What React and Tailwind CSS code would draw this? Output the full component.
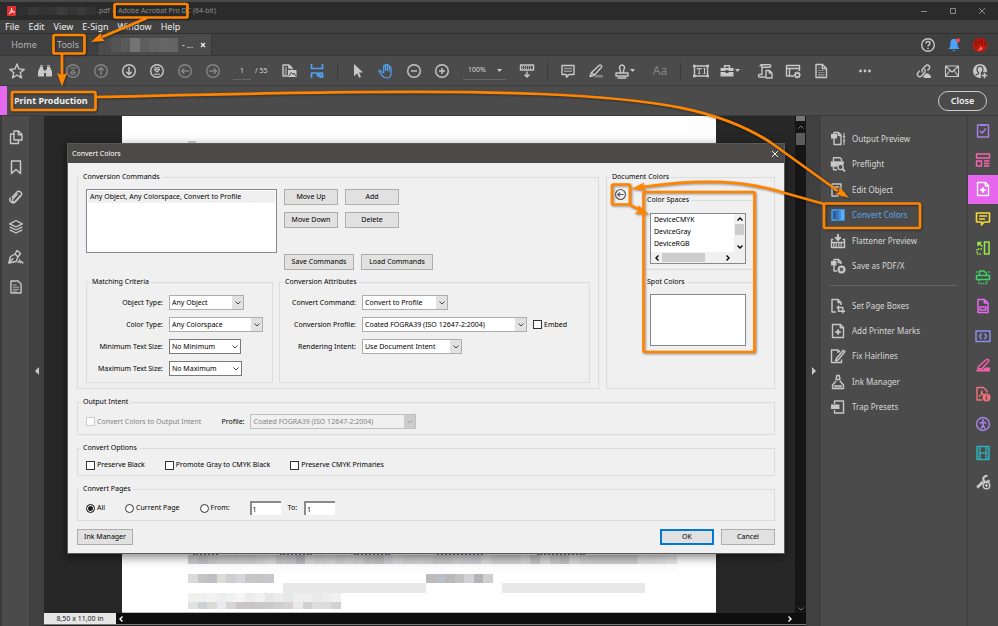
import React from "react";

function Icon({ children, className = "text-[#c8c8c8]", size = 16, box = "0 0 16 16" }) {
  return (
    <svg
      width={size}
      height={size}
      viewBox={box}
      fill="none"
      stroke="currentColor"
      strokeWidth="1.4"
      strokeLinejoin="round"
      className={"shrink-0 " + className}
      aria-hidden="true"
    >
      {children}
    </svg>
  );
}

const solid = { fill: "currentColor", stroke: "none" };

const glyphs = {
  star: <path d="M8 1l2 5 5.2.4-4 3.3 1.3 5.1L8 12l-4.500 2.800 1.300-5.100-4-3.300L6 6z" />,
  binoculars: (
    <g {...solid}>
      <path d="M3 4h3v2l1 1v6.500H1V8.500zM13 4h-3v2L9 7v6.500h6V8.500z" />
      <path d="M7 7.500h2v2.500H7zM3 2.200h3v1.200H3zM10 2.200h3v1.200h-3z" />
    </g>
  ),
  first: (
    <>
      <circle cx="8" cy="8" r="6.300" />
      <path d="M5 5h6M8 7l-2.600 2.800h5.200zM5.400 11.200h5.200" strokeWidth="1.100" />
    </>
  ),
  up: (
    <>
      <circle cx="8" cy="8" r="6.300" />
      <path d="M8 12V4.600M5.200 7.300L8 4.500l2.800 2.800" />
    </>
  ),
  down: (
    <>
      <circle cx="8" cy="8" r="6.300" />
      <path d="M8 4v7.400M5.200 8.700L8 11.500l2.800-2.800" />
    </>
  ),
  last: (
    <>
      <circle cx="8" cy="8" r="6.300" />
      <path d="M5 11.200h6M8 9L5.400 6.300h5.200zM5.400 4.800h5.200" strokeWidth="1.100" />
    </>
  ),
  left: (
    <>
      <circle cx="8" cy="8" r="6.300" />
      <path d="M12 8H4.600M7.300 5.200L4.500 8l2.800 2.800" />
    </>
  ),
  right: (
    <>
      <circle cx="8" cy="8" r="6.300" />
      <path d="M4 8h7.400M8.700 5.200L11.500 8l-2.800 2.800" />
    </>
  ),
  thumbs: (
    <>
      <path d="M7 13H2V2h6l3 3v1.500M7.800 2v3H11" />
      <path d="M3.500 7h2.500M3.500 9h2.500M3.500 11h2.500M4 5h2" strokeWidth="1" />
      <path d="M7 7h8.500v7H7z" {...solid} />
      <path d="M8 13l2.200-3.500 1.600 2L13 10l1.800 3" stroke="#4b4b4b" strokeWidth="1" />
    </>
  ),
  fit: <path d="M2.500 1v4.500h11V1M2.500 15v-5h6l3 2.500v2.500M8.500 10v3h3M13.500 15v-5H10" strokeWidth="1.700" />,
  cursor: <path d="M4 1l9 8.500H9l2 4.500-1.800.8L7.200 10.400 4 13z" {...solid} />,
  hand: (
    <path d="M4.600 9.500L2.300 7.400c-.8-.6-1.800.3-1.200 1.100l3.300 4.300C5.400 14.300 6.600 15 8.500 15c3 0 4.500-1.800 4.500-4.500V4.700c0-1.100-1.700-1.100-1.700 0V8 3c0-1.100-1.900-1.100-1.900 0v4.500V2.200C9.400 1 7.500 1 7.500 2.200v5.300V3.200c0-1.100-1.800-1.100-1.800 0v6.300z" strokeWidth="1.200" />
  ),
  minus: (
    <>
      <circle cx="8" cy="8" r="6.300" />
      <path d="M5 8h6" />
    </>
  ),
  plus: (
    <>
      <circle cx="8" cy="8" r="6.300" />
      <path d="M5 8h6M8 5v6" />
    </>
  ),
  keyboard: (
    <>
      <path d="M1.500 2h13v5h-13z" />
      <path d="M3 3.800h10M3 5.300h10" strokeDasharray="1 1" strokeWidth="1" />
      <path d="M8 8.500v5M5.500 11.500L8 14l2.500-2.500" />
    </>
  ),
  comment: (
    <>
      <path d="M2 2.500h12v9H9l-2.500 2.800v-2.800H2z" />
      <path d="M4 5.500h8M4 8.200h8" opacity=".6" />
    </>
  ),
  pen: (
    <>
      <path d="M3.500 9.500l7.800-7.300c1.300-1 3.200.8 2.200 2.100L6.500 12l-4.500 1.500zM3.500 9.500l3 2.500" />
      <path d="M8 12h7v2.500H6z" {...solid} opacity=".45" />
    </>
  ),
  stamp: <path d="M2 10h12v3H2zM3.500 15h9M6.200 10c.8-2 .3-3-.3-4a2.500 2.500 0 1 1 4.200 0c-.6 1-1.100 2-.3 4" />,
  textbox: (
    <>
      <path d="M1.500 3h13v10h-13z" />
      <path d="M4 6.500V5.500h4.500v1M6.200 5.500v5M5.200 10.500h2M10.500 5.500h2M11.500 5.500v5M10.500 10.500h2" strokeWidth="1" />
      <path d="M0 1.700h2.500v2.500H0zM13.500 1.700H16v2.500h-2.500zM0 11.800h2.500v2.500H0zM13.500 11.800H16v2.500h-2.500z" {...solid} />
    </>
  ),
  toolbox: (
    <>
      <path d="M1.500 5h13v3h-5V7h-3v1h-5zM1.500 9h5v1h3V9h5v4.500h-13z" {...solid} />
      <path d="M5.500 5V2.700h5V5" />
    </>
  ),
  scroll: (
    <>
      <path d="M8 14H2.500c-1.500 0-1.500-2.500 0-2.500H5V4C5 1.500 3 1.500 3 3.500M4 1.700h8.500c1.700 0 1.700 2.600 0 2.600H5.500" />
      <path d="M9 7.500h3.500L15 10v5H9zM12.300 7.500V10H15" />
    </>
  ),
  formgear: (
    <>
      <path d="M9 13H1.500V2.500h13V8M1.500 5.500h13M4.500 5.500V13" />
      <circle cx="12.300" cy="12" r="2" />
      <path d="M12.300 8.500v1.500M12.300 14v1.500M8.800 12h1.500M14.300 12h1.500M9.800 9.500l1 1M13.800 13.500l1 1M14.800 9.500l-1 1M10.800 13.500l-1 1" />
    </>
  ),
  page: (
    <>
      <path d="M3 1.500h6.500L13.500 5.500v9H3zM9.300 1.500v4h4.200" />
      <path d="M5 5h2.500M5 7.500h6.500M5 9.500h6.500M5 11.500h6.500M5 13h6.500" opacity=".5" strokeWidth="1" />
    </>
  ),
  dots: (
    <g {...solid}>
      <circle cx="3.500" cy="8" r="1.400" />
      <circle cx="8" cy="8" r="1.400" />
      <circle cx="12.500" cy="8" r="1.400" />
    </g>
  ),
  link: (
    <>
      <path d="M7 9.500c-1.300-1-1.300-2.400-.3-3.500l3-3.200c2.300-2 5.300.8 3.300 3.200L11.500 7.600M8 6c1.500 1 1.500 2.500.5 3.700l-3 3.200c-2.300 2.200-5.500-.7-3.500-3.200l1.700-1.900" />
      <path d="M8.500 15a1.700 1.700 0 0 1 .3-3.300 2.600 2.600 0 0 1 4.800.3 1.600 1.600 0 0 1 .6 3z" {...solid} />
    </>
  ),
  mail: <path d="M1.500 3h13v10.500h-13zM1.500 3L8 9l6.500-6M1.500 13.500L6 7.500M14.500 13.500L10 7.500" strokeWidth="1.100" />,
  user: (
    <>
      <circle cx="8" cy="8" r="7" {...solid} />
      <path d="M3.500 12.300l3-1.600v-1C4 7.500 4.800 3.200 8 3.200s4 4.300 1.500 6.500v1.300" stroke="#4b4b4b" strokeWidth="1.300" />
      <circle cx="12.500" cy="12.500" r="3.800" fill="#4b4b4b" stroke="none" />
      <path d="M12.500 9.700v5.600M9.700 12.500h5.600" strokeWidth="1.600" />
    </>
  ),
  help: (
    <>
      <circle cx="8" cy="8" r="6.300" />
      <path d="M6 6.500c0-2.600 4-2.600 4 0 0 1.400-2 1.400-2 3M8 10.700v1.200" />
    </>
  ),
  copy: (
    <>
      <path d="M6 2h4.500L14 5.500V11H6zM10.300 2v3.700H14" />
      <path d="M6 5H2.500v9.500h8V11" />
    </>
  ),
  bookmark: <path d="M3.500 2h9v12.500L8 10.500l-4.500 4z" strokeWidth="1.500" />,
  clip: <path d="M12.500 6.500l-5.200 5.700c-1.800 1.700-4-.4-2.500-2.200L9.600 4.800M4 8.500l4.700-5.200c2.600-2.500 6.500.7 4 3.700l-5 5.600c-3 3.200-7.800-.7-5-4.200" />,
  layers: <path d="M8 1.500l6.300 3.300L8 8 1.700 4.800zM1.700 7.800L8 11l6.300-3.200M1.700 10.800L8 14l6.300-3.200" />,
  sign: (
    <>
      <path d="M.8 14l1.700-6.500 4.500-2.500 3 3-2 4.500zM7 5l2-3.500 3.500 3L10 8M.8 14l4.500-4.700" />
      <path d="M9.500 13.800l2.300-2.800.5 2.800 1.400-1.300.6 1.300h1.200" strokeWidth="1.200" />
    </>
  ),
  doc: (
    <>
      <path d="M3 2h7l3 3v9H3z" />
      <path d="M5 6h3.500M5 8.200h6M5 10.400h6M5 12.200h4" opacity=".8" strokeWidth="1" />
    </>
  ),
  preview: (
    <>
      <path d="M4 7v6.500h7V4L8.500 1.500H4V3M8.300 1.500V4.500H11" />
      <path d="M1 3h6v4.500H1z" {...solid} />
      <path d="M14 2v12M13 5.500h2.300M13 10h2.300" strokeWidth="1.100" />
    </>
  ),
  preflight: (
    <>
      <path d="M3.500 5V1.800h6.500L11.500 3.300V5" />
      <path d="M.8 5.300h13v3.200h-1.500a3.800 3.800 0 0 0-5.500 2.300H.8z" {...solid} />
      <path d="M3.500 10.500V13.800H7" />
      <circle cx="10.500" cy="11" r="2.600" />
      <path d="M12.500 13l2.500 2.300" strokeWidth="1.800" />
    </>
  ),
  edit: (
    <>
      <path d="M9 14H2V2h9v5M4 5h5M4 8h3" />
      <path d="M11.700 8v6.500M8.500 11.300H15" strokeWidth="1.900" />
    </>
  ),
  flatten: (
    <>
      <path d="M3.500 6.500h-2v8h13v-8h-2M2 9.500h12" />
      <path d="M3 11h10M3 13h10" strokeDasharray="1.500 1" />
      <path d="M8 1v5M5.300 4.200L8 7l2.700-2.800" strokeWidth="1.900" />
    </>
  ),
  savex: (
    <>
      <path d="M4 7v6h3M11 6V4L8.500 1.500H4V3M8.300 1.500V4.500H11" />
      <path d="M1 3h5.500v4.500H1z" {...solid} />
      <circle cx="11.500" cy="11.500" r="4" {...solid} />
      <path d="M10 10l3 3M13 10l-3 3" stroke="#4b4b4b" />
    </>
  ),
  boxes: (
    <>
      <path d="M6 14H2V1.500h6l3 3V7M8 1.500v3h3" />
      <path d="M8.500 7.500v5.700H15M6.500 9.500h6.300V15.500" />
    </>
  ),
  marks: (
    <>
      <path d="M2.500 1.500h8l3 3v10h-11zM10.300 1.500v3.200h3.200" />
      <path d="M8 6v6M5 9h6" />
      <circle cx="8" cy="9" r="1.800" {...solid} />
    </>
  ),
  hair: (
    <>
      <path d="M11.500 11.500v3h-10V2H8l2 2M8 2v3" />
      <path d="M15 3.500l-7 8.500-2.500 1 .8-2.500 7-8.300z" />
    </>
  ),
  ink: (
    <>
      <path d="M6 5.500L6.800 1.500h2.400L10 5.500M5.500 5.500h5M6 7L2.500 11v3.500h11V11L10 7" />
      <path d="M4 11h8v2.500H4z" {...solid} opacity=".8" />
    </>
  ),
  trap: (
    <>
      <path d="M4.500 5V2h9v12h-9v-3" />
      <path d="M1 5.500h8.500v4.500H1z" {...solid} />
    </>
  ),
  check: (
    <>
      <path d="M2.500 2h11v12h-11zM5 8l2.200 2L11 5.500" />
      <path d="M5.500 1h5v2h-5z" {...solid} />
    </>
  ),
  organize: <path d="M1.500 2h13v4h-13zM1.500 9h5v5h-5zM9 9h5.500M9 11.500h5.500M9 14h5.500" />,
  note: <path d="M1.500 2h13v9H9l-2.500 3v-3h-5zM4 5h8M4 8h6" strokeWidth="1.600" />,
  crop: (
    <>
      <path d="M9.500 2H14v12H9.500z" strokeWidth="1.500" />
      <path d="M7 9H2v5h5" strokeDasharray="1.500 1" />
      <path d="M7.500 6.500L3 2.500M3 6V2.500h3.500" strokeWidth="1.500" />
    </>
  ),
  scan: (
    <>
      <path d="M4.500 6V2h4.500l2.500 2.500V6M1.500 6.500h13v4h-13z" strokeWidth="1.500" />
      <path d="M4 11v3.500h8V11M1 3h2M13 3h2" strokeDasharray="1.500 1" />
    </>
  ),
  redact: (
    <>
      <path d="M3 1.500h6.500L13 5v9.500H3zM9.300 1.500V5H13" strokeWidth="1.500" />
      <path d="M5 9h6v3H5z" />
    </>
  ),
  code: (
    <>
      <path d="M1 3h14v10.500H1z" strokeWidth="1.500" />
      <path d="M6.500 5.500L4.500 8.200l2 2.800M9.500 5.500l2 2.700-2 2.800" />
    </>
  ),
  sketch: (
    <>
      <path d="M3.500 9.500l8-7c1.500-1 3 .8 2 2.100L7 11.500l-4 .5z" strokeWidth="1.500" />
      <path d="M2 12.500h6l2-2h5v4H1z" {...solid} />
    </>
  ),
  pdfinfo: (
    <>
      <path d="M7 14H2V1.500h6.500L12 5v1.500M4 11c2-2 3-4 3-6 0 3 1 4 2 4" />
      <circle cx="11.500" cy="11.500" r="4" {...solid} />
      <path d="M11.500 10.800v3M11.500 9v1" stroke="#4b4b4b" />
    </>
  ),
  access: (
    <>
      <circle cx="8" cy="8" r="6.500" />
      <circle cx="8" cy="4.500" r="1.200" {...solid} />
      <path d="M4.500 6.700h7M8 6.700v3M8 9.500l-2 3M8 9.500l2 3" strokeWidth="1.500" />
    </>
  ),
  film: (
    <>
      <path d="M2 1.500h12v13H2zM5 1.500v13M11 1.500v13M5 8h6" strokeWidth="1.400" />
      <path d="M3 3v11M13 3v11" strokeDasharray="1 1" />
    </>
  ),
  wrench: (
    <>
      <path d="M2.200 13.500L8 7.800" strokeWidth="2.800" />
      <path d="M12.500 2.200a3 3 0 1 0 1.600 3.800" strokeWidth="2.200" />
      <circle cx="11.500" cy="11.500" r="3.300" fill="#4b4b4b" />
      <path d="M11.500 9.800v3.400M9.800 11.500h3.400" strokeWidth="1.200" />
    </>
  ),
};

function ToolButton({ name, label, tone, caret }) {
  return (
    <button type="button" aria-label={label} className="flex h-7 w-7 shrink-0 items-center justify-center">
      <Icon className={tone}>{glyphs[name]}</Icon>
      {caret && <Caret />}
    </button>
  );
}

function Caret() {
  return (
    <svg width="5" height="3" viewBox="0 0 5 3" className="shrink-0" aria-hidden="true">
      <path d="M0 0h5L2.500 3z" fill="#c8c8c8" />
    </svg>
  );
}

function Divider() {
  return <span className="mx-[6px] h-4 w-px shrink-0 bg-[#3a3a3a]" />;
}

function Chevron({ turn = "down", bold }) {
  const d = {
    down: "M1.500 2.500L4 5l2.500-2.500",
    up: "M1.500 5.500L4 3l2.500 2.500",
    left: "M5.500 1.500L3 4l2.500 2.500",
    right: "M2.500 1.500L5 4 2.500 6.500",
  }[turn];
  return (
    <svg width="8" height="8" viewBox="0 0 8 8" className="shrink-0" aria-hidden="true">
      <path d={d} fill="none" stroke="currentColor" strokeWidth={bold ? "1.400" : "1"} />
    </svg>
  );
}

function Select({ id, value, className, plain, disabled }) {
  const frame = disabled
    ? "border-[#bfbfbf] bg-[#f0f0f0] text-[#838383]"
    : plain
      ? "border-[#7a7a7a] bg-white text-black"
      : "border-[#adadad] bg-white text-black";
  const arrow = disabled ? "bg-[#cccccc] text-[#a0a0a0]" : plain ? "bg-white text-[#444]" : "bg-[#e1e1e1] text-[#444]";
  return (
    <span className={"relative flex h-[15px] shrink-0 " + className}>
      <select
        id={id}
        disabled={disabled}
        defaultValue={value}
        className={"h-full w-full appearance-none border pl-[2px] pr-3 leading-[13px] opacity-100 " + frame}
      >
        <option>{value}</option>
      </select>
      <span className={"pointer-events-none absolute inset-y-px right-px flex w-[11px] items-center justify-center " + arrow}>
        <Chevron />
      </span>
    </span>
  );
}

function Group({ title, className = "", children }) {
  return (
    <fieldset className={"min-w-0 border border-[#dcdcdc] px-[8px] pb-[5px] " + className}>
      <legend className="-ml-[5px] h-[10px] px-[2px] leading-[10px]">{title}</legend>
      {children}
    </fieldset>
  );
}

function Push({ children, className = "", primary }) {
  return (
    <button
      type="button"
      className={
        "h-4 shrink-0 bg-[#e1e1e1] leading-[12px] " +
        (primary ? "border-2 border-[#0078d7] " : "border border-[#adadad] ") +
        className
      }
    >
      {children}
    </button>
  );
}

function Check({ id, children, disabled }) {
  return (
    <span className={"flex items-center gap-[2px] " + (disabled ? "text-[#838383]" : "")}>
      <input
        id={id}
        type="checkbox"
        disabled={disabled}
        className={"h-[9px] w-[9px] appearance-none border bg-white " + (disabled ? "border-[#cccccc]" : "border-[#333]")}
      />
      <label htmlFor={id}>{children}</label>
    </span>
  );
}

function Radio({ id, children, checked }) {
  return (
    <span className="flex items-center gap-[2px]">
      <input
        id={id}
        type="radio"
        name="pages"
        defaultChecked={checked}
        className="h-[9px] w-[9px] appearance-none rounded-full border border-[#333] bg-white checked:bg-[#222] checked:shadow-[inset_0_0_0_1px_white]"
      />
      <label htmlFor={id}>{children}</label>
    </span>
  );
}

function Field({ id, label, children }) {
  return (
    <>
      <label htmlFor={id} className="text-right whitespace-nowrap">{label}</label>
      {children}
    </>
  );
}

function ConvertDialog() {
  return (
    <section
      role="dialog"
      aria-label="Convert Colors"
      className="absolute left-[67px] top-[143px] w-[718px] border border-[#5a5a5a] bg-[#f0f0f0] text-[7px] leading-[10px] text-black shadow-[0_3px_10px_rgba(0,0,0,0.5)]"
    >
      <header className="flex h-[19px] items-center justify-between bg-[#4b4a48] pl-[4px] pr-[5px] text-white">
        <h2>Convert Colors</h2>
        <button type="button" aria-label="Close dialog">
          <svg width="8" height="8" viewBox="0 0 8 8" aria-hidden="true">
            <path d="M1 1l6 6M7 1L1 7" stroke="#eee" />
          </svg>
        </button>
      </header>
      <div className="flex flex-col gap-2 px-[9px] pb-[8px] pt-[9px]">
        <div className="flex gap-[7px]">
          <Group title="Conversion Commands" className="flex-1">
            <div className="flex gap-[7px] pt-[7px]">
              <ul className="h-16 w-[191px] border border-[#828790] bg-white p-px">
                <li className="bg-[#f0f0f0] px-[2px] py-px">Any Object, Any Colorspace, Convert to Profile</li>
              </ul>
              <div className="flex flex-col">
                <div className="flex gap-[7px]">
                  <Push className="w-[54px]">Move Up</Push>
                  <Push className="w-[54px]">Add</Push>
                </div>
                <div className="mt-[7px] flex gap-[7px]">
                  <Push className="w-[54px]">Move Down</Push>
                  <Push className="w-[54px]">Delete</Push>
                </div>
                <div className="mt-[26px] flex gap-[7px]">
                  <Push className="w-[70px]">Save Commands</Push>
                  <Push className="w-[72px]">Load Commands</Push>
                </div>
              </div>
            </div>
            <div className="mt-[7px] flex gap-[6px]">
              <Group title="Matching Criteria" className="w-[187px]">
                <div className="grid grid-cols-[68px_auto] items-center justify-start gap-x-[6px] gap-y-[7px] pb-px pt-[8px]">
                  <Field id="objtype" label="Object Type:"><Select id="objtype" value="Any Object" className="w-[75px]" /></Field>
                  <Field id="coltype" label="Color Type:"><Select id="coltype" value="Any Colorspace" className="w-[94px]" /></Field>
                  <Field id="mintext" label="Minimum Text Size:"><Select id="mintext" value="No Minimum" plain className="w-[72px]" /></Field>
                  <Field id="maxtext" label="Maximum Text Size:"><Select id="maxtext" value="No Maximum" plain className="w-[73px]" /></Field>
                </div>
              </Group>
              <Group title="Conversion Attributes" className="flex-1">
                <div className="grid grid-cols-[68px_auto] items-center justify-start gap-x-[6px] gap-y-[7px] pt-[8px]">
                  <Field id="command" label="Convert Command:"><Select id="command" value="Convert to Profile" className="w-[86px]" /></Field>
                  <Field id="profile" label="Conversion Profile:">
                    <span className="flex items-center gap-[6px]">
                      <Select id="profile" value="Coated FOGRA39 (ISO 12647-2:2004)" className="w-[165px]" />
                      <Check id="embed">Embed</Check>
                    </span>
                  </Field>
                  <Field id="intent" label="Rendering Intent:"><Select id="intent" value="Use Document Intent" className="w-[100px]" /></Field>
                </div>
              </Group>
            </div>
          </Group>
          <Group title="Document Colors" className="w-[169px]">
            <div className="flex gap-4">
              <button type="button" aria-label="Collapse" className="mt-[7px] h-[11px] w-[11px]">
                <Icon size={11} box="1 1 14 14" className="text-[#555]">{glyphs.left}</Icon>
              </button>
              <div className="flex w-[112px] flex-col gap-[7px] pt-[13px]">
                <Group title="Color Spaces" className="border-x-0">
                  <div className="mt-2 flex h-[51px] flex-col border border-[#828790] bg-white">
                    <div className="flex min-h-0 flex-1">
                      <ul className="flex-1 overflow-hidden px-[3px] leading-[12px]">
                        <li>DeviceCMYK</li>
                        <li>DeviceGray</li>
                        <li>DeviceRGB</li>
                        <li className="whitespace-nowrap">sRGB IEC61966-2.1</li>
                      </ul>
                      <div className="flex w-[11px] flex-col items-center justify-between bg-[#f0f0f0] py-px text-black">
                        <Chevron bold turn="up" />
                        <span className="mb-2 h-[11px] w-[9px] bg-[#cdcdcd]" />
                        <Chevron bold />
                      </div>
                    </div>
                    <div className="flex h-[11px] items-center bg-[#f0f0f0] pl-[2px] pr-[13px] text-black">
                      <Chevron bold turn="left" />
                      <span className="ml-px mr-auto h-[9px] w-[43px] bg-[#cdcdcd]" />
                      <Chevron bold turn="right" />
                    </div>
                  </div>
                </Group>
                <Group title="Spot Colors" className="border-x-0 border-b-0">
                  <ul className="mt-[7px] h-[52px] border border-[#828790] bg-white" />
                </Group>
              </div>
            </div>
          </Group>
        </div>
        <Group title="Output Intent">
          <div className="flex items-center pt-[7px]">
            <Check id="toout" disabled>Convert Colors to Output Intent</Check>
            <label htmlFor="outprofile" className="ml-5 mr-[6px]">Profile:</label>
            <Select id="outprofile" disabled value="Coated FOGRA39 (ISO 12647-2:2004)" className="w-[166px]" />
          </div>
        </Group>
        <Group title="Convert Options">
          <div className="flex gap-5 pt-[7px]">
            <Check id="black">Preserve Black</Check>
            <Check id="gray">Promote Gray to CMYK Black</Check>
            <Check id="cmyk">Preserve CMYK Primaries</Check>
          </div>
        </Group>
        <Group title="Convert Pages">
          <div className="flex items-center gap-5 pt-[7px]">
            <Radio id="all" checked>All</Radio>
            <Radio id="current">Current Page</Radio>
            <Radio id="range">From:</Radio>
            <span className="flex items-center gap-[7px]">
              <input aria-label="From page" defaultValue="1" className="h-[14px] w-[31px] border-l-2 border-t-2 border-[#8a8a8a] bg-white px-px" />
              <label htmlFor="topage">To:</label>
              <input id="topage" defaultValue="1" className="h-[14px] w-[31px] border-l-2 border-t-2 border-[#8a8a8a] bg-white px-px" />
            </span>
          </div>
        </Group>
        <footer className="flex gap-[7px]">
          <Push className="mr-auto w-14">Ink Manager</Push>
          <Push primary className="w-[54px]">OK</Push>
          <Push className="w-[54px]">Cancel</Push>
        </footer>
      </div>
    </section>
  );
}

function Mosaic({ cells, className }) {
  return (
    <div className={"flex " + className}>
      {cells.map((c, i) => (
        <span key={i} className="flex-1" style={{ backgroundColor: c }} />
      ))}
    </div>
  );
}

const headBar = "#cdcdcf #c4c4c8 #cdcdcd #d2d2d2 #d0d0d2 #d3d3d3 #d0d0d0 #d6d6d6 #dcdcdc #cbcbcd #c8c8ca #bbbac2 #d9d9d9 #d4d4d4 #d8d8d8 #d0d0d0 #d6d6d6 #d2d2d2 #c7c7c9 #c3c3c3 #d0d0d8 #dadada #d3d3d3 #d5d5d5 #d3d3d5 #cbcbcb #cccbcb #d4d3d3 #d0d0d4 #cdcdd3 #dcdcdc #d2d2d2 #d2d2d2 #d2d2d2 #dadada #c6c5c2 #d8dbdf #cbcbcd #c4c4c8 #dcdcdc #d2d2d2 #cfcfcf #cfcfcf #cfcfcf #cfcfcf #cfcfcf #e2e2e2 #e0e0e0 #e4e4e4 #e8e8e8".split(" ");
const wordBar = "#dadad8 #c4c4c6 #bfbfc3 #dcdcda #cfcfd1 #d4d6dc #c7c5c6 #c5c5c5 #c8c8cc".split(" ");
const darkBar = "#bdbab8 #babec8 #b8b8ba #c2c2c2 #d2d2d4 #b4b4b6 #cfcfcf".split(" ");
const faintBar = "#efefed #f0f0f0 #f2f2f2 #ededed #eff0f0 #f6f6f6 #ececec #f1f1f1 #e6e6e6 #ececec #e4e8e8 #eeeeee #ededed #ebe8ea #ededed #eef2f2".split(" ");
const footBar = "#e0e2e2 #cdd1d3 #dadad8 #e8ecee #d6d4d4 #cac6c6 #c9c5c7 #c9c9cb #cacaca #d0cecf #d6d2d0 #e8e8ea #d0d0d2 #dcdcdc #dcdcdc #d2d2d4".split(" ");
const titleBar = "#303030 #383838 #333333 #363636 #3c3c3c #353535 #3a3a3a #333333".split(" ");
const tabBar = "#545454 #5a5a5a #747474 #5d5d5d #626262 #666666 #646464".split(" ");

function DocumentPage() {
  return (
    <div className="ml-[78px] mr-[79px] flex flex-1 flex-col border-b border-[#bbb] bg-white pb-[3px] pl-[66px]">
      <div className="mb-auto mt-[25px] h-[2px] w-2 bg-[#ccc]" />
      <div className="flex h-[2px] bg-white">
        <span className="ml-[5px] w-[25px] border-t-2 border-dotted border-[#777]" />
        <span className="ml-[62px] w-[32px] border-t-2 border-dotted border-[#777]" />
        <span className="ml-[42px] w-[36px] border-t-2 border-dotted border-[#777]" />
        <span className="ml-[47px] w-[46px] border-t-2 border-dotted border-[#777]" />
        <span className="ml-[54px] w-[48px] border-t-2 border-dotted border-[#777]" />
      </div>
      <Mosaic className="h-[9px] w-[489px]" cells={headBar} />
      <div className="h-[10px] w-[489px] bg-[#fdfdfd]" />
      <div className="flex h-[9px]">
        <Mosaic className="w-[86px]" cells={wordBar} />
        <Mosaic className="ml-[152px] w-[67px]" cells={darkBar} />
      </div>
      <div className="flex h-[10px]">
        <span className="ml-[95px] w-[143px] bg-[#e8e8e8]" />
        <span className="w-[76px]" />
        <span className="w-[143px] bg-[#e8e8e8]" />
      </div>
      <Mosaic className="h-[9px] w-[153px]" cells={faintBar} />
      <Mosaic className="h-[7px] w-[153px]" cells={footBar} />
    </div>
  );
}

const tools = [
  ["preview", "Output Preview"],
  ["preflight", "Preflight"],
  ["edit", "Edit Object"],
  ["colors", "Convert Colors"],
  ["flatten", "Flattener Preview"],
  ["savex", "Save as PDF/X"],
];
const moreTools = [
  ["boxes", "Set Page Boxes"],
  ["marks", "Add Printer Marks"],
  ["hair", "Fix Hairlines"],
  ["ink", "Ink Manager"],
  ["trap", "Trap Presets"],
];
const rail = [
  ["check", "text-[#a583ea]"],
  ["organize", "text-[#f767b0]"],
  ["marks", "text-white"],
  ["note", "text-[#f5d837]"],
  ["crop", "text-[#9be84b]"],
  ["scan", "text-[#3fd266]"],
  ["redact", "text-[#e868ee]"],
  ["code", "text-[#8b8bf0]"],
  ["sketch", "text-[#f75fae]"],
  ["pdfinfo", "text-[#f4717a]"],
  ["access", "text-[#ab82ef]"],
  ["film", "text-[#2bb0b8]"],
  ["wrench", "text-[#c8c8c8]"],
];

function ToolItem({ name, label }) {
  const active = name === "colors";
  return (
    <li className="flex">
      <button type="button" className={"flex items-center gap-[6px] " + (active ? "text-[#5aa6ee]" : "text-[#d8d8d8]")}>
        {active ? (
          <svg width="16" height="16" viewBox="0 0 16 16" className="shrink-0" aria-hidden="true">
            <path d="M2 3h12v10H2z" fill="#2a5f96" stroke="#4fa3f5" strokeWidth="1.300" />
            <path d="M6 3h3v10H6z" fill="#3878b8" />
            <path d="M9 3h2v10H9z" fill="#4590d8" />
            <path d="M11 3h3v10h-3z" fill="#5aaeff" />
          </svg>
        ) : (
          <Icon>{glyphs[name]}</Icon>
        )}
        {label}
      </button>
    </li>
  );
}

function Annotations() {
  return (
    <svg
      className="pointer-events-none absolute left-0 top-0 drop-shadow-[1px_1px_1px_rgba(0,0,0,0.4)]"
      width="998"
      height="626"
      viewBox="0 0 998 626"
      fill="none"
      stroke="#ff8400"
      strokeWidth="2.700"
      aria-hidden="true"
    >
      <rect x="114.500" y="4" width="73" height="13.500" rx="1.500" />
      <rect x="53.500" y="35" width="31" height="18.500" rx="1.500" />
      <rect x="12" y="92" width="83.500" height="18" rx="1.500" />
      <rect x="612" y="184.500" width="18" height="20" rx="1.500" />
      <rect x="643.500" y="192" width="111" height="160" rx="1.500" />
      <rect x="824" y="203.500" width="96" height="24.500" rx="1.500" />
      <path d="M147 18L102 37M62 54v22M96 97C240 94 420 89 540 94S720 110 770 142L838 191M824 204L785 193C745 181 705 178 642 187M630 205l10 5" />
      <g fill="#ff8400" stroke="none">
        <path d="M91 42l10-9 .5 4.500L105 41z" />
        <path d="M62 86.500l-5-13.500 5 2 5-2z" />
        <path d="M849 198l-14-4 4-2 .5-5.500z" />
        <path d="M631 189l13-6.500-1.500 4.700L646 191z" />
        <path d="M649 214.500l-14.500-.5 4-3.500-.5-5.500z" />
      </g>
    </svg>
  );
}

export default function App() {
  return (
    <div className="relative flex min-h-screen flex-col overflow-hidden bg-[#4b4b4b] font-['Noto_Sans','Open_Sans',sans-serif] text-[9px] leading-[12px] text-[#d8d8d8]">
      <header className="flex h-[20px] items-center border-t-2 border-[#4a4a4a] bg-[#2b2b2b] pl-[7px] text-[7px] text-[#8c8c8c]">
        <svg width="9" height="10" viewBox="0 0 9 10" aria-hidden="true">
          <rect width="9" height="10" rx="1" fill="#e03131" />
          <path d="M2 8c2-2 3-4 2.500-6C4 4 6 6 7.500 6 6 5.500 3.500 6 2 8z" fill="none" stroke="#fff" strokeWidth=".9" />
        </svg>
        <Mosaic className="ml-[2px] h-2 w-[78px]" cells={titleBar} />
        <span className="ml-px w-[21px] whitespace-nowrap">.pdf -</span>
        <h1 className="whitespace-nowrap">Adobe Acrobat Pro DC (64-bit)</h1>
        <div className="ml-auto mr-3 flex gap-[21px]">
          <button type="button" aria-label="Minimize"><svg width="8" height="8"><path d="M1 4.500h6" stroke="#8c8c8c" /></svg></button>
          <button type="button" aria-label="Maximize"><svg width="8" height="8"><path d="M1.500 1.500h5v5h-5z" fill="none" stroke="#8c8c8c" /></svg></button>
          <button type="button" aria-label="Close window"><svg width="8" height="8"><path d="M1 1l6 6M7 1L1 7" stroke="#8c8c8c" /></svg></button>
        </div>
      </header>
      <nav className="flex h-[14px] items-center gap-[9px] border-b border-[#303030] bg-[#404040] pl-[5px] text-[#eeeeee]">
        {["File", "Edit", "View", "E-Sign", "Window", "Help"].map((m) => (
          <button key={m} type="button">{m}</button>
        ))}
      </nav>
      <div className="flex h-[22px] items-stretch border-b border-[#383838] bg-[#404040] text-[#b4b4b4]">
        <button type="button" className="w-12 text-center">Home</button>
        <button type="button" className="w-[50px] border-r border-[#363636] pr-[9px] text-center">Tools</button>
        <div className="flex w-[114px] items-center border-r border-[#363636] bg-[#4b4b4b] pl-[13px] text-[8px] text-[#eee]">
          <Mosaic className="h-[14px] w-[67px]" cells={tabBar} />
          <span className="ml-1 w-[18px]">- ...</span>
          <button type="button" aria-label="Close tab">
            <svg width="6" height="6"><path d="M1 1l4 4M5 1L1 5" stroke="#eee" strokeWidth="1.300" /></svg>
          </button>
        </div>
        <div className="ml-auto mr-[10px] flex items-center gap-3">
          <button type="button" aria-label="Help"><Icon>{glyphs.help}</Icon></button>
          <button type="button" aria-label="Notifications">
            <svg width="12" height="14" viewBox="0 0 12 14" aria-hidden="true">
              <path d="M6 1c-3 0-3.500 2-3.500 4.500S2 9.500.500 11h11C10 9.500 9.500 8 9.500 5.500S9 1 6 1zM4.500 12h3L6 13.500z" fill="#4aa3f8" />
              <circle cx="9.800" cy="2.300" r="2.100" fill="#ef4a5a" />
            </svg>
          </button>
          <button type="button" aria-label="Account">
            <svg width="16" height="16" viewBox="0 0 16 16" aria-hidden="true">
              <circle cx="8" cy="8" r="7.300" fill="#b81a10" />
              <path d="M4 3v6M7 1.500V7M10 2v6M13 4v5" stroke="#7c0d08" strokeWidth="1.100" />
              <path d="M5 13c3-.5 3-2 3-4l2 2 1-1c0 3-3 4.500-6 3z" fill="#ff6a58" />
            </svg>
          </button>
        </div>
      </div>
      <div className="flex h-[30px] items-center border-b border-[#3e3e3e] pl-[3px] pr-1 text-[7px]">
        <ToolButton name="star" label="Star" />
        <ToolButton name="binoculars" label="Find" />
        <ToolButton name="first" label="First page" tone="text-[#858585]" />
        <ToolButton name="up" label="Previous page" tone="text-[#858585]" />
        <ToolButton name="down" label="Next page" />
        <ToolButton name="last" label="Last page" />
        <ToolButton name="left" label="Previous view" tone="text-[#858585]" />
        <ToolButton name="right" label="Next view" tone="text-[#858585]" />
        <input aria-label="Page number" defaultValue="1" className="ml-[6px] h-[18px] w-[18px] shrink-0 border-b border-[#666] bg-transparent text-center" />
        <span className="ml-[4px] mr-[4px] w-4 shrink-0 whitespace-nowrap">/ 55</span>
        <ToolButton name="thumbs" label="Page thumbnails" />
        <ToolButton name="fit" label="Fit page" tone="text-[#4fa3f5]" />
        <Divider />
        <ToolButton name="cursor" label="Select" />
        <ToolButton name="hand" label="Hand" tone="text-[#4fa3f5]" />
        <ToolButton name="minus" label="Zoom out" />
        <ToolButton name="plus" label="Zoom in" />
        <button type="button" className="mx-[7px] flex h-[18px] w-[43px] shrink-0 items-center justify-between border-b border-[#666] pl-[5px] pr-[4px]">
          100% <Caret />
        </button>
        <ToolButton name="keyboard" label="Keyboard" />
        <Divider />
        <ToolButton name="comment" label="Comment" />
        <ToolButton name="pen" label="Highlight" />
        <ToolButton name="stamp" label="Stamp" caret />
        <button type="button" className="ml-2 w-7 shrink-0 text-center text-[12px] text-[#858585]">Aa</button>
        <Divider />
        <ToolButton name="textbox" label="Edit text" />
        <ToolButton name="toolbox" label="Toolbox" caret />
        <span className="w-2 shrink-0" />
        <ToolButton name="scroll" label="Scripts" />
        <ToolButton name="formgear" label="Form" />
        <ToolButton name="page" label="Page" />
        <span className="w-4 shrink-0" />
        <ToolButton name="dots" label="More" />
        <span className="ml-auto" />
        <ToolButton name="link" label="Share link" />
        <ToolButton name="mail" label="Mail" />
        <ToolButton name="user" label="Invite" />
      </div>
      <div className="flex h-[30px] items-center justify-between border-b border-[#3a3a3a] pr-[11px] font-semibold text-[#f0f0f0]">
        <div className="flex h-full items-center gap-[7px]">
          <span className="h-full w-[7px] bg-[#e569ef]" />
          <h2 className="font-bold">Print Production</h2>
        </div>
        <button type="button" className="h-5 w-[49px] rounded-full border border-[#cccccc]">Close</button>
      </div>
      <main className="flex flex-1">
        <div className="flex w-[29px] shrink-0 flex-col border-l-2 border-[#3c3c3c] pt-[6px]">
          {["copy", "bookmark", "clip", "layers", "sign", "doc"].map((n) => (
            <button key={n} type="button" aria-label={n} className="flex h-[30px] items-center justify-center">
              <Icon>{glyphs[n]}</Icon>
            </button>
          ))}
        </div>
        <button type="button" aria-label="Expand left pane" className="flex w-[15px] shrink-0 items-center justify-center bg-[#404040]">
          <svg width="4" height="8"><path d="M4 0v8L0 4z" fill="#c8c8c8" /></svg>
        </button>
        <div className="flex min-w-0 flex-1 flex-col">
          <div className="flex flex-1">
            <div className="flex min-w-0 flex-1 flex-col bg-[#272727]"><DocumentPage /></div>
            <div className="flex w-[11px] flex-col items-center bg-[#161616] text-[#777]">
              <span className="h-[5px] w-[9px] bg-[#777]" />
              <span className="my-[2px]"><Chevron turn="up" /></span>
              <span className="h-3 w-[9px] bg-[#5c5c5c]" />
              <span className="mt-auto"><Chevron /></span>
            </div>
          </div>
          <div className="flex h-[11px] items-center bg-[#0e0e0e] text-[7px] leading-[11px] text-white">
            <span className="mr-px w-[72px] bg-[#e6e6e6] text-center text-[#222]">8,50 x 11,00 in</span>
            <Chevron bold turn="left" />
            <span className="ml-auto mr-[12px]"><Chevron bold turn="right" /></span>
          </div>
          <div className="h-[2px] border-t border-[#777] bg-[#1c1c1c]" />
        </div>
        <button type="button" aria-label="Collapse right pane" className="flex w-[15px] shrink-0 items-center justify-center bg-[#404040]">
          <svg width="4" height="8"><path d="M0 0v8l4-4z" fill="#c8c8c8" /></svg>
        </button>
        <aside className="w-[146px] shrink-0 pl-[9px] pt-[10px] text-[8px]">
          <ul className="grid h-[153px] auto-rows-fr">
            {tools.map(([n, l]) => <ToolItem key={n} name={n} label={l} />)}
          </ul>
          <hr className="mb-[7px] mr-[10px] mt-[6px] border-[#636363]" />
          <ul className="grid h-[127px] auto-rows-fr">
            {moreTools.map(([n, l]) => <ToolItem key={n} name={n} label={l} />)}
          </ul>
        </aside>
        <div className="w-[31px] shrink-0 border-l border-[#3e3e3e]">
          <div className="grid h-[381px] auto-rows-fr">
            {rail.map(([n, c]) => (
              <button key={n} type="button" aria-label={n} className={"flex items-center justify-center " + (c === "text-white" ? "bg-[#e766ee]" : "")}>
                <Icon className={c}>{glyphs[n]}</Icon>
              </button>
            ))}
          </div>
        </div>
      </main>
      <ConvertDialog />
      <Annotations />
    </div>
  );
}
